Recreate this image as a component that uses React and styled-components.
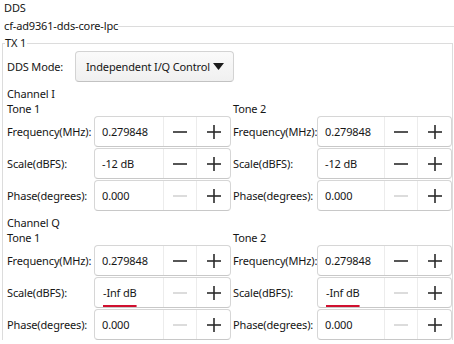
import React from "react";
import styled, { createGlobalStyle } from "styled-components";

const Global = createGlobalStyle`
  html, body { margin: 0; padding: 0; background: #ffffff; }
  body {
    width: 454px; height: 344px; overflow: hidden;
    font-family: "Noto Sans", "Open Sans", sans-serif;
    font-size: 11px; letter-spacing: -0.15px; color: #161616;
  }
  * { box-sizing: border-box; }
`;

const Page = styled.div`
  display: flex;
  flex-direction: column;
  width: 454px;
`;

const Title = styled.div`
  height: 17px;
  line-height: 16px;
  padding-left: 4px;
`;

const GroupHeader = styled.div`
  display: flex;
  align-items: center;
  height: 18px;
  padding-left: 4px;
`;

const HeaderText = styled.span`
  line-height: 16px;
  white-space: nowrap;
`;

const HeaderLine = styled.span`
  flex: 1;
  height: 1px;
  background: #dcdcdc;
`;

const Frame = styled.fieldset`
  margin: 0 0 0 2px;
  width: 451px;
  padding: 0 0 0 2px;
  border: 1px solid #dcdcdc;
  border-bottom: none;
  min-width: 0;
`;

const Legend = styled.legend`
  padding: 0 1px 0 0;
  margin-left: 0;
  line-height: 16px;
  height: 16px;
`;

const ModeRow = styled.div`
  display: flex;
  align-items: center;
  height: 31px;
`;

const ModeLabel = styled.span`
  width: 70px;
  padding-left: 2px;
  white-space: nowrap;
`;

const Combo = styled.button`
  display: flex;
  align-items: center;
  justify-content: space-between;
  width: 159px;
  height: 31px;
  padding: 0 9px 0 10px;
  border: 1px solid #d3d3d3;
  border-bottom-color: #c2c2c2;
  border-radius: 4px;
  background: linear-gradient(#fafafa, #f0f0f0);
  font: inherit;
  letter-spacing: inherit;
  color: #161616;
  white-space: nowrap;
`;

const Section = styled.div`
  height: 15px;
  line-height: 15px;
  padding-left: 2px;
  margin-top: ${(p) => (p.$gap ? "4px" : "0")};
`;

const Tones = styled.div`
  display: flex;
`;

const ToneCol = styled.div`
  display: flex;
  flex-direction: column;
  width: ${(p) => p.$w}px;
`;

const ToneTitle = styled.div`
  height: 15px;
  line-height: 15px;
  padding-left: 2px;
`;

const Rows = styled.div`
  display: grid;
  grid-template-columns: ${(p) => p.$label}px ${(p) => p.$box}px;
  row-gap: 1px;
`;

const Label = styled.div`
  display: flex;
  align-items: center;
  height: 31px;
  padding-left: 2px;
  white-space: nowrap;
`;

const Spin = styled.div`
  display: grid;
  grid-template-columns: 1fr 33px 33px;
  height: 31px;
  border: 1px solid #d6d6d6;
  border-bottom-color: #c8c8c8;
  border-radius: 4px;
  background: #fff;
`;

const Value = styled.div`
  display: flex;
  align-items: center;
  padding-left: 7px;
  border-right: 1px solid #ececec;
`;

const Marked = styled.span`
  text-decoration: underline;
  text-decoration-color: #d0102f;
  text-decoration-thickness: 2px;
  text-underline-offset: 8px;
  padding: 0 1px;
`;

const StepBtn = styled.div`
  display: flex;
  align-items: center;
  justify-content: center;
  border-right: ${(p) => (p.$last ? "none" : "1px solid #ececec")};
  color: ${(p) => (p.$disabled ? "#d4d4d4" : "#2b2b2b")};
`;

const Minus = () => (
  <svg width="14" height="14" viewBox="0 0 14 14">
    <line x1="0" y1="7" x2="14" y2="7" stroke="currentColor" strokeWidth="1.6" />
  </svg>
);
const Plus = () => (
  <svg width="14" height="14" viewBox="0 0 14 14">
    <line x1="0" y1="7" x2="14" y2="7" stroke="currentColor" strokeWidth="1.6" />
    <line x1="7" y1="0" x2="7" y2="14" stroke="currentColor" strokeWidth="1.6" />
  </svg>
);

const Caret = () => (
  <svg width="11" height="7" viewBox="0 0 11 7">
    <path d="M0 0 H11 L5.5 7 Z" fill="#1b1b1b" />
  </svg>
);

const SpinBox = ({ value, minusOff, marked }) => (
  <Spin>
    <Value>{marked ? <Marked>{value}</Marked> : value}</Value>
    <StepBtn $disabled={minusOff}>
      <Minus />
    </StepBtn>
    <StepBtn $last>
      <Plus />
    </StepBtn>
  </Spin>
);

const Tone = ({ title, w, label, box, scale }) => (
  <ToneCol $w={w}>
    <ToneTitle>{title}</ToneTitle>
    <Rows $label={label} $box={box}>
      <Label>Frequency(MHz):</Label>
      <SpinBox value="0.279848" />
      <Label>Scale(dBFS):</Label>
      <SpinBox value={scale} minusOff={scale === "-Inf dB"} marked={scale === "-Inf dB"} />
      <Label>Phase(degrees):</Label>
      <SpinBox value="0.000" minusOff />
    </Rows>
  </ToneCol>
);

const Channel = ({ name, scale, gap }) => (
  <>
    <Section $gap={gap}>{name}</Section>
    <Tones>
      <Tone title="Tone 1" w={227} label={89} box={137} scale={scale} />
      <Tone title="Tone 2" w={222} label={86} box={135} scale={scale} />
    </Tones>
  </>
);

export default function App() {
  return (
    <Page>
      <Global />
      <Title>DDS</Title>
      <GroupHeader>
        <HeaderText>cf-ad9361-dds-core-lpc</HeaderText>
        <HeaderLine />
      </GroupHeader>
      <Frame>
        <Legend>TX 1</Legend>
        <ModeRow>
          <ModeLabel>DDS Mode:</ModeLabel>
          <Combo>
            <span>Independent I/Q Control</span>
            <Caret />
          </Combo>
        </ModeRow>
        <Channel name="Channel I" scale="-12 dB" gap />
        <Channel name="Channel Q" scale="-Inf dB" gap />
      </Frame>
    </Page>
  );
}
